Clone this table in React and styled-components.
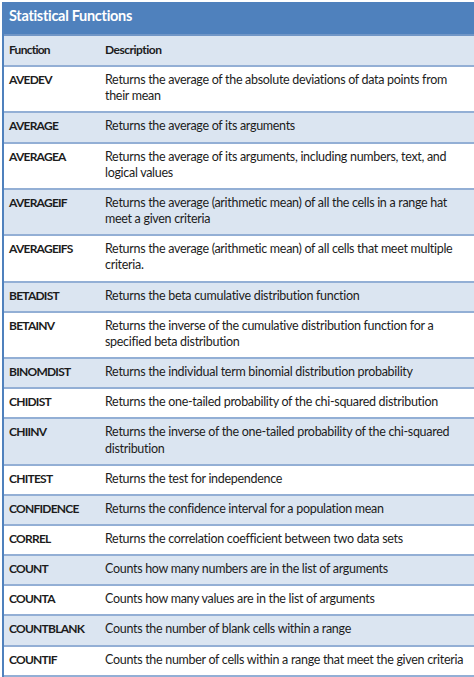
import React from "react";
import styled, { createGlobalStyle } from "styled-components";

const GlobalStyle = createGlobalStyle`
  html, body {
    margin: 0;
    padding: 0;
    background: #ffffff;
  }
  body {
    font-family: "Lato", "Liberation Sans", sans-serif;
  }
`;

// each description is split where the printed sheet wraps it
const rows = [
  ["AVEDEV", ["Returns the average of the absolute deviations of data points from", "their mean"]],
  ["AVERAGE", ["Returns the average of its arguments"]],
  ["AVERAGEA", ["Returns the average of its arguments, including numbers, text, and", "logical values"]],
  ["AVERAGEIF", ["Returns the average (arithmetic mean) of all the cells in a range hat", "meet a given criteria"]],
  ["AVERAGEIFS", ["Returns the average (arithmetic mean) of all cells that meet multiple", "criteria."]],
  ["BETADIST", ["Returns the beta cumulative distribution function"]],
  ["BETAINV", ["Returns the inverse of the cumulative distribution function for a", "specified beta distribution"]],
  ["BINOMDIST", ["Returns the individual term binomial distribution probability"]],
  ["CHIDIST", ["Returns the one-tailed probability of the chi-squared distribution"]],
  ["CHIINV", ["Returns the inverse of the one-tailed probability of the chi-squared", "distribution"]],
  ["CHITEST", ["Returns the test for independence"]],
  ["CONFIDENCE", ["Returns the confidence interval for a population mean"]],
  ["CORREL", ["Returns the correlation coefficient between two data sets"]],
  ["COUNT", ["Counts how many numbers are in the list of arguments"]],
  ["COUNTA", ["Counts how many values are in the list of arguments"]],
  ["COUNTBLANK", ["Counts the number of blank cells within a range"]],
  ["COUNTIF", ["Counts the number of cells within a range that meet the given criteria"]],
];

const Sheet = styled.div`
  margin: 2px 0 0 2px;
  border-left: 2px solid #4f81bd;
  border-bottom: 3px solid #4f81bd;
  color: #1c1c1c;
  font-size: 12.5px;
  letter-spacing: -0.3px;
  overflow: hidden;
`;

const TitleBar = styled.div`
  height: 34px;
  background: #4f81bd;
  color: #ffffff;
  font-weight: 700;
  font-size: 14.5px;
  letter-spacing: -0.3px;
  display: flex;
  align-items: center;
  padding: 0 0 5px 5px;
  box-sizing: border-box;
  border-bottom: 2px solid #7196c6;
`;

const Row = styled.div`
  display: grid;
  grid-template-columns: 101px 1fr;
  background: ${p => (p.shade ? "#dbe5f1" : "#ffffff")};
  border-bottom: 2px solid #93afd5;
  box-sizing: border-box;
  line-height: 16.15px;
  padding: ${p => (p.head ? "6px 0 7px" : "5px 0 7px")};
`;

const Name = styled.div`
  padding-left: 5px;
  font-weight: 700;
  font-size: 12px;
  letter-spacing: -0.75px;
`;

const HeadLabel = styled.div`
  font-weight: 700;
  font-size: 12px;
  letter-spacing: -0.5px;
`;

const Desc = styled.div`
  white-space: nowrap;
`;

const Line = styled.div``;

export default function App() {
  return (
    <>
      <GlobalStyle />
      <Sheet>
        <TitleBar>Statistical Functions</TitleBar>
        <Row shade head>
          <Name>Function</Name>
          <HeadLabel>Description</HeadLabel>
        </Row>
        {rows.map(([name, lines], i) => (
          <Row key={name} shade={i % 2 === 1}>
            <Name>{name}</Name>
            <Desc>
              {lines.map(l => (
                <Line key={l}>{l}</Line>
              ))}
            </Desc>
          </Row>
        ))}
      </Sheet>
    </>
  );
}
